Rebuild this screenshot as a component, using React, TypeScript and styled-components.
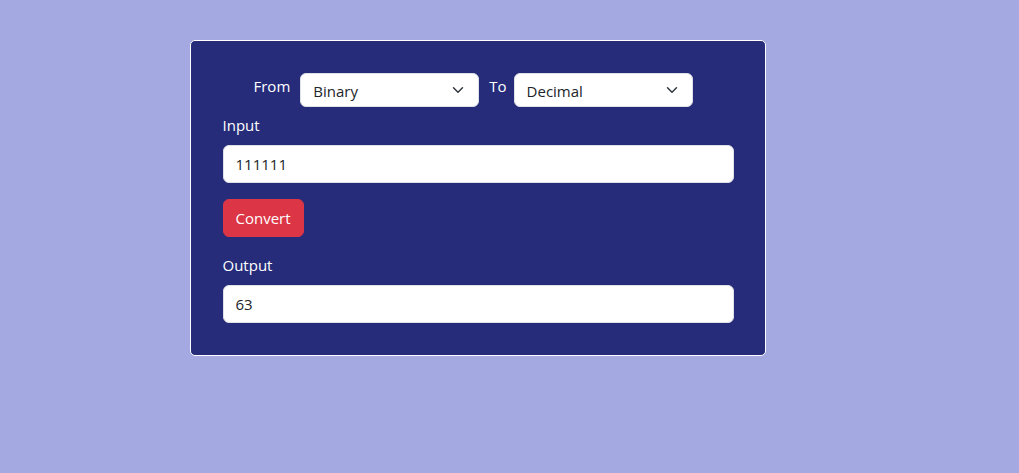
import React, { useState } from 'react';
import styled, { createGlobalStyle } from 'styled-components';

const options = ['Binary', 'Decimal', 'Octal', 'Hexadecimal'];

const convert = (value: string, from: string, to: string) => {
  const bases: Record<string, number> = { Binary: 2, Decimal: 10, Octal: 8, Hexadecimal: 16 };
  const n = parseInt(value, bases[from]);
  if (Number.isNaN(n)) return '';
  return n.toString(bases[to]).toUpperCase();
};

const App: React.FC = () => {
  const [from, setFrom] = useState('Binary');
  const [to, setTo] = useState('Decimal');
  const [input, setInput] = useState('111111');
  const [output, setOutput] = useState('63');

  return (
    <>
      <GlobalStyle />
      <Page>
        <Container>
          <Card>
            <SelectRow>
              <InlineLabel $gap={10}>From</InlineLabel>
              <Select value={from} onChange={e => setFrom(e.target.value)}>
                {options.map(option => (
                  <option key={option}>{option}</option>
                ))}
              </Select>
              <InlineLabel $gap={7}>To</InlineLabel>
              <Select value={to} onChange={e => setTo(e.target.value)}>
                {options.map(option => (
                  <option key={option}>{option}</option>
                ))}
              </Select>
            </SelectRow>
            <Label>Input</Label>
            <Input value={input} onChange={e => setInput(e.target.value)} />
            <Button onClick={() => setOutput(convert(input, from, to))}>Convert</Button>
            <Label>Output</Label>
            <Input value={output} readOnly />
          </Card>
        </Container>
      </Page>
    </>
  );
};

export default App;

const GlobalStyle = createGlobalStyle`
  * {
    box-sizing: border-box;
  }
  body {
    margin: 0;
    background-color: #a5a9e1;
    font-family: 'Open Sans', 'Noto Sans', sans-serif;
    font-size: 15px;
    color: #212529;
  }
`;
const Page = styled.div`
  min-height: 100vh;
  padding-top: 40px;
`;
const Container = styled.div`
  width: 960px;
  margin: 0 auto;
`;
const Card = styled.div`
  width: 60%;
  margin-left: 160px;
  background-color: #262c7a;
  border: 1px solid #ffffff;
  border-radius: 5px;
  padding: 32px 31px 32px 32px;
  display: flex;
  flex-direction: column;
`;
const SelectRow = styled.div`
  display: flex;
  align-items: flex-start;
  padding-left: 31px;
  margin-bottom: 6px;
`;
const InlineLabel = styled.label<{ $gap: number }>`
  color: #ffffff;
  line-height: 24px;
  margin: 1px ${props => props.$gap}px 0 0;
`;
const Select = styled.select`
  appearance: none;
  flex: 0 0 179px;
  width: 179px;
  height: 34px;
  margin-right: 10px;
  padding: 2px 36px 0 12px;
  font-family: inherit;
  font-size: 15px;
  color: #212529;
  background-color: #ffffff;
  background-image: url("data:image/svg+xml,%3csvg xmlns='http://www.w3.org/2000/svg' viewBox='0 0 16 16'%3e%3cpath fill='none' stroke='%23343a40' stroke-linecap='round' stroke-linejoin='round' stroke-width='2' d='m2 5 6 6 6-6'/%3e%3c/svg%3e");
  background-repeat: no-repeat;
  background-position: right 12px center;
  background-size: 16px 12px;
  border: 1px solid #dee2e6;
  border-radius: 6px;
`;
const Label = styled.label`
  color: #ffffff;
  line-height: 24px;
  margin-bottom: 8px;
`;
const Input = styled.input`
  width: 100%;
  height: 38px;
  padding: 0 12px;
  font-family: inherit;
  font-size: 15px;
  color: #212529;
  background-color: #ffffff;
  border: 1px solid #dee2e6;
  border-radius: 6px;
  outline: none;
`;
const Button = styled.button`
  align-self: flex-start;
  height: 38px;
  margin: 16px 0;
  padding: 0 12px;
  font-family: inherit;
  font-size: 15px;
  color: #ffffff;
  background-color: #dc3545;
  border: 1px solid #dc3545;
  border-radius: 6px;
  cursor: pointer;
`;
